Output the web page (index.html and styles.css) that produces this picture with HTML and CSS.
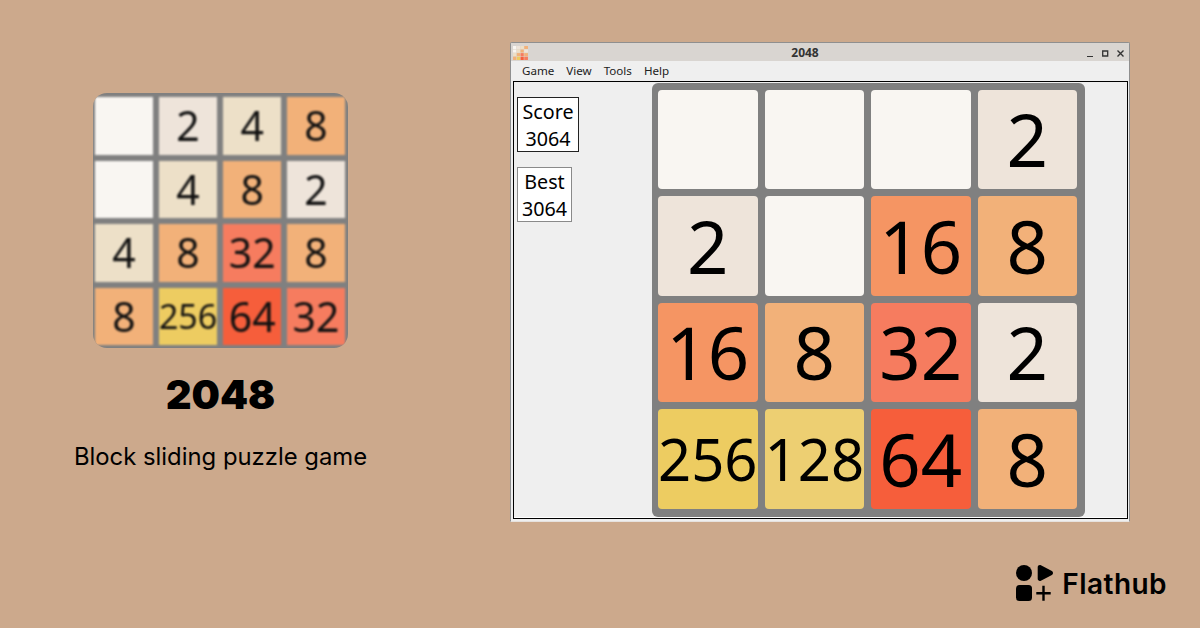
FILE: index.html
```html
<!DOCTYPE html>
<html lang="en">
<head>
<meta charset="utf-8">
<title>2048 on Flathub</title>
<link rel="stylesheet" href="styles.css">
</head>
<body>
<div class="page">
  <main class="main">
    <section class="app">
      <div class="icon">
        <div class="icon-board">
          <div class="it t0"></div><div class="it t2">2</div><div class="it t4">4</div><div class="it t8">8</div>
          <div class="it t0"></div><div class="it t4">4</div><div class="it t8">8</div><div class="it t2">2</div>
          <div class="it t4">4</div><div class="it t8">8</div><div class="it t32">32</div><div class="it t8">8</div>
          <div class="it t8">8</div><div class="it t256 it-small">256</div><div class="it t64">64</div><div class="it t32">32</div>
        </div>
      </div>
      <h1 class="name">2048</h1>
      <p class="summary">Block sliding puzzle game</p>
    </section>
    <section class="window">
      <header class="titlebar">
        <svg class="app-icon" viewBox="0 0 16 15" aria-hidden="true">
          <rect width="16" height="15" fill="#e0d6ca"/>
          <rect x="0" y="0" width="3.500" height="3.200" fill="#f9f6f2"/><rect x="4" y="0" width="3.500" height="3.200" fill="#eee4da"/><rect x="8" y="0" width="3.500" height="3.200" fill="#ede0c8"/><rect x="12" y="0" width="4" height="3.200" fill="#f2b179"/>
          <rect x="0" y="3.800" width="3.500" height="3.200" fill="#f9f6f2"/><rect x="4" y="3.800" width="3.500" height="3.200" fill="#ede0c8"/><rect x="8" y="3.800" width="3.500" height="3.200" fill="#f2b179"/><rect x="12" y="3.800" width="4" height="3.200" fill="#eee4da"/>
          <rect x="0" y="7.600" width="3.500" height="3.200" fill="#ede0c8"/><rect x="4" y="7.600" width="3.500" height="3.200" fill="#f2b179"/><rect x="8" y="7.600" width="3.500" height="3.200" fill="#f67c5f"/><rect x="12" y="7.600" width="4" height="3.200" fill="#f2b179"/>
          <rect x="0" y="11.400" width="3.500" height="3.600" fill="#f2b179"/><rect x="4" y="11.400" width="3.500" height="3.600" fill="#edcc61"/><rect x="8" y="11.400" width="3.500" height="3.600" fill="#f65e3b"/><rect x="12" y="11.400" width="4" height="3.600" fill="#f67c5f"/>
        </svg>
        <span class="win-title">2048</span>
        <div class="win-buttons">
          <svg class="win-btn" viewBox="0 0 7 7" aria-hidden="true"><path d="M0 6.500h6" stroke="#333" stroke-width="1"/></svg>
          <svg class="win-btn" viewBox="0 0 7 7" aria-hidden="true"><path d="M.700 1h5v5h-5z" fill="none" stroke="#333" stroke-width="1.300"/></svg>
          <svg class="win-btn" viewBox="0 0 7 7" aria-hidden="true"><path d="M.500 .500l6 6M6.500 .500l-6 6" stroke="#333" stroke-width="1.400"/></svg>
        </div>
      </header>
      <nav class="menubar">
        <span>Game</span><span>View</span><span>Tools</span><span>Help</span>
      </nav>
      <div class="frame">
        <div class="content">
          <aside class="scores">
            <div class="score score-active"><div>Score</div><div>3064</div></div>
            <div class="score score-idle"><div>Best</div><div>3064</div></div>
          </aside>
          <div class="board">
            <div class="tile t0"></div><div class="tile t0"></div><div class="tile t0"></div><div class="tile t2">2</div>
            <div class="tile t2">2</div><div class="tile t0"></div><div class="tile t16">16</div><div class="tile t8">8</div>
            <div class="tile t16">16</div><div class="tile t8">8</div><div class="tile t32">32</div><div class="tile t2">2</div>
            <div class="tile t256 tile-small">256</div><div class="tile t128 tile-small">128</div><div class="tile t64">64</div><div class="tile t8">8</div>
          </div>
        </div>
      </div>
    </section>
  </main>
  <footer class="footer">
    <svg class="fh-logo" viewBox="0 0 37 36" aria-hidden="true">
      <circle cx="8" cy="8" r="8"/>
      <rect x="0" y="20" width="16" height="16" rx="3.500"/>
      <path d="M21.700 2.200c0-1.700 1.800-2.700 3.200-1.900l11 5.800c1.500.8 1.500 3 0 3.800l-11 5.800c-1.400.8-3.200-.2-3.200-1.900z"/>
      <path d="M26.300 20.700h2.400v6.300h6v2.400h-6v6.300h-2.400v-6.300h-6v-2.400h6z"/>
    </svg>
    <span class="fh-text">Flathub</span>
  </footer>
</div>
</body>
</html>
```
FILE: styles.css
```css
* { box-sizing: border-box; }
html, body { margin: 0; padding: 0; }
body { width: 1200px; height: 628px; overflow: hidden; background: #cca98c; font-family: Inter, sans-serif; color: #000; }
.page { width: 1200px; height: 628px; display: flex; flex-direction: column; }
.main { display: flex; align-items: flex-start; height: 565px; }
.app { width: 441px; padding-top: 93px; display: flex; flex-direction: column; align-items: center; }
.icon { width: 255px; height: 255px; border-radius: 14px; overflow: hidden; background: #808080; }
.icon-board { display: grid; grid-template-columns: repeat(4, 1fr); grid-template-rows: repeat(4, 1fr); gap: 6px; padding: 4px 3px 3px 2px; width: 100%; height: 100%; filter: blur(0.8px); }
.it { display: flex; align-items: center; justify-content: center; font-family: "Noto Sans", sans-serif; font-size: 41px; line-height: 1; color: #111; }
.it-small { font-size: 34px; }
.name { margin: 23px 0 0; font-size: 40px; line-height: 48px; font-weight: 900; }
.summary { margin: 23px 0 0; font-size: 23.850px; line-height: 29px; font-weight: 400; }
.t0 { background: #f9f6f2; }
.t2 { background: #eee4da; }
.t4 { background: #ede0c8; }
.t8 { background: #f2b179; }
.t16 { background: #f59563; }
.t32 { background: #f67c5f; }
.t64 { background: #f65e3b; }
.t128 { background: #edcf72; }
.t256 { background: #edcc61; }
.window { margin: 42px 0 0 69px; width: 620px; height: 480px; background: #efefef; border: 1px solid #8f8f8f; border-bottom-color: #e6e2de; border-radius: 2px 2px 0 0; display: flex; flex-direction: column; font-family: "Noto Sans", sans-serif; }
.titlebar { height: 18px; background: #d9d5d1; display: flex; align-items: center; position: relative; padding: 2px 5px 0 2px; }
.app-icon { width: 15px; height: 14px; display: block; }
.win-title { position: absolute; left: 0; right: 30px; top: 0; text-align: center; font-size: 12px; font-weight: 700; color: #333; line-height: 19px; }
.win-buttons { margin-left: auto; display: flex; gap: 8px; position: relative; }
.win-btn { width: 7px; height: 7px; display: block; }
.menubar { height: 20px; display: flex; align-items: center; gap: 12px; padding: 0 0 1px 11px; font-size: 11.600px; color: #222; background: #efefef; }
.frame { flex: 1; margin: 0 1px 2px 2px; border: 1px solid #000; background: #fff; padding: 0 0 1px; }
.content { height: 100%; background: #efefef; display: flex; }
.scores { width: 138px; padding: 15px 0 0 3px; display: flex; flex-direction: column; align-items: flex-start; gap: 15px; }
.score { background: #fff; font-size: 19.700px; line-height: 27px; text-align: center; height: 55px; }
.score-active { border: 1px solid #222; width: 62px; }
.score-idle { border: 1px solid #8a8a8a; width: 55px; }
.board { width: 433px; height: 434px; margin-top: 1px; background: #808080; border-radius: 6px; padding: 7px 8px 8.500px 6px; display: grid; grid-template-columns: repeat(4, 1fr); grid-template-rows: repeat(4, 1fr); gap: 7px; }
.tile { border-radius: 4px; display: flex; align-items: center; justify-content: center; font-size: 72.500px; line-height: 1; color: #000; }
.tile-small { font-size: 58px; }
.footer { flex: 1; display: flex; align-items: flex-start; justify-content: flex-end; gap: 9px; padding-right: 33px; }
.fh-logo { width: 37px; height: 36px; display: block; }
.fh-text { font-size: 28px; line-height: 38px; font-weight: 600; letter-spacing: 0.45px; }
```
